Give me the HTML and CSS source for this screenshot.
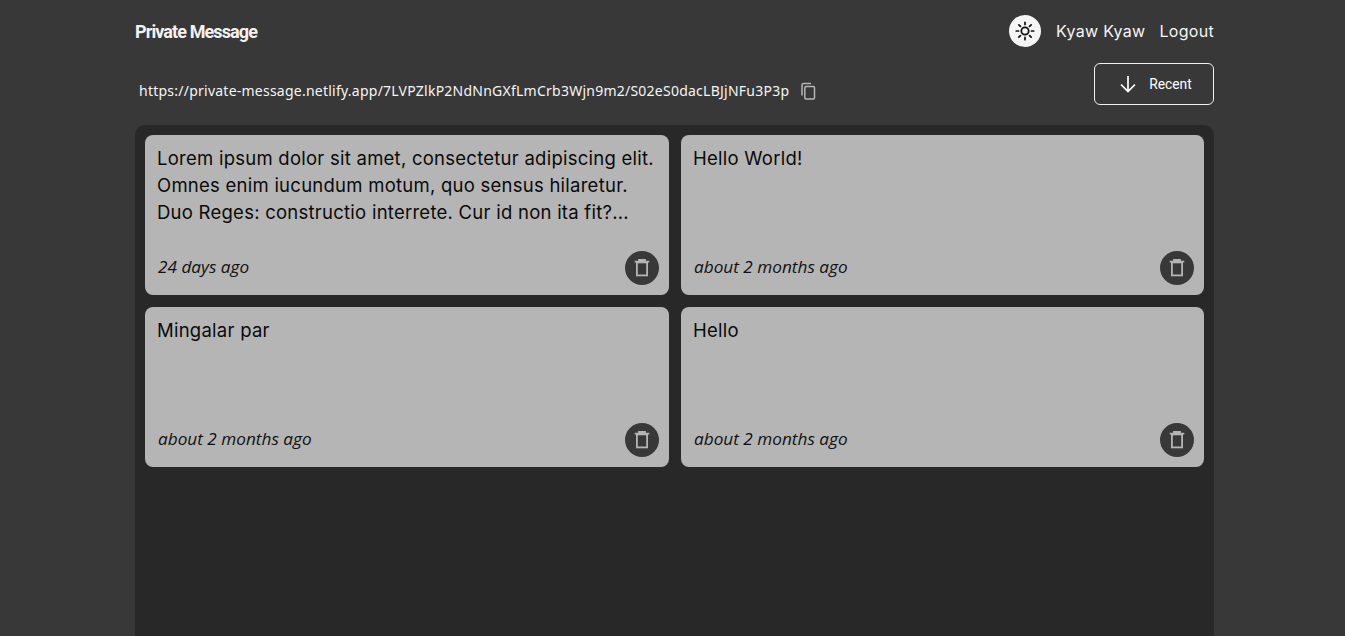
FILE: index.html
```html
<!DOCTYPE html>
<html lang="en">
<head>
<meta charset="utf-8">
<title>Private Message</title>
<link rel="stylesheet" href="styles.css">
</head>
<body>
<div class="page">
  <header class="topbar">
    <div class="brand">Private Message</div>
    <nav class="nav">
      <button class="theme" aria-label="Toggle theme">
        <svg viewBox="0 0 24 24" width="22" height="22" fill="none" stroke="#111" stroke-width="1.900" stroke-linecap="round"><circle cx="12" cy="12" r="4"/><path d="M12 2.500v2.500M12 19v2.500M2.500 12H5M19 12h2.500M5.300 5.300 7 7M17 17l1.700 1.700M5.300 18.700 7 17M17 7l1.700-1.700"/></svg>
      </button>
      <span class="nav-user">Kyaw Kyaw</span>
      <span class="nav-link">Logout</span>
    </nav>
  </header>
  <section class="linkbar">
    <div class="link">
      <span class="url">https://private-message.netlify.app/7LVPZlkP2NdNnGXfLmCrb3Wjn9m2/S02eS0dacLBJjNFu3P3p</span>
      <svg class="copy" viewBox="0 0 18 18" width="18" height="18" fill="none" stroke="#b5b5b5" stroke-width="1.500"><path d="M3 13.500V3.200c0-1 .6-1.700 1.700-1.700H12"/><rect x="5.800" y="4.500" width="9.700" height="12.500" rx="1.200"/></svg>
    </div>
    <button class="sort">
      <svg viewBox="0 0 20 20" width="20" height="20" fill="none" stroke="#fff" stroke-width="1.700"><path d="M10 2v15M3 10.500l7 7 7-7"/></svg>
      <span>Recent</span>
    </button>
  </section>
  <main class="panel">
    <article class="card">
      <p class="msg">Lorem ipsum dolor sit amet, consectetur adipiscing elit. Omnes enim iucundum motum, quo sensus hilaretur. Duo Reges: constructio interrete. Cur id non ita fit?...</p>
      <footer class="card-foot">
        <time>24 days ago</time>
        <button class="del" aria-label="Delete"><svg viewBox="0 0 20 20" width="20" height="20" fill="none" stroke="#b5b5b5" stroke-width="1.800"><path d="M2.700 3.600h14.600M7 3.400V1.900h6v1.500"/><rect x="4.900" y="4.400" width="10.200" height="13"/></svg></button>
      </footer>
    </article>
    <article class="card">
      <p class="msg">Hello World!</p>
      <footer class="card-foot">
        <time>about 2 months ago</time>
        <button class="del" aria-label="Delete"><svg viewBox="0 0 20 20" width="20" height="20" fill="none" stroke="#b5b5b5" stroke-width="1.800"><path d="M2.700 3.600h14.600M7 3.400V1.900h6v1.500"/><rect x="4.900" y="4.400" width="10.200" height="13"/></svg></button>
      </footer>
    </article>
    <article class="card">
      <p class="msg">Mingalar par</p>
      <footer class="card-foot">
        <time>about 2 months ago</time>
        <button class="del" aria-label="Delete"><svg viewBox="0 0 20 20" width="20" height="20" fill="none" stroke="#b5b5b5" stroke-width="1.800"><path d="M2.700 3.600h14.600M7 3.400V1.900h6v1.500"/><rect x="4.900" y="4.400" width="10.200" height="13"/></svg></button>
      </footer>
    </article>
    <article class="card">
      <p class="msg">Hello</p>
      <footer class="card-foot">
        <time>about 2 months ago</time>
        <button class="del" aria-label="Delete"><svg viewBox="0 0 20 20" width="20" height="20" fill="none" stroke="#b5b5b5" stroke-width="1.800"><path d="M2.700 3.600h14.600M7 3.400V1.900h6v1.500"/><rect x="4.900" y="4.400" width="10.200" height="13"/></svg></button>
      </footer>
    </article>
  </main>
</div>
</body>
</html>
```
FILE: styles.css
```css
* { box-sizing: border-box; }
html, body { margin: 0; height: 100%; overflow: hidden; }
body { background: #383838; color: #fff; font-family: "Inter", sans-serif; }
.page { width: 1079px; margin-left: 135px; height: 636px; display: flex; flex-direction: column; }
.topbar { display: flex; justify-content: space-between; align-items: center; height: 63px; padding-bottom: 1px; }
.brand { font-family: "Roboto", sans-serif; font-weight: 700; font-size: 18px; letter-spacing: -0.9px; color: #f2f2f2; }
.nav { display: flex; align-items: center; }
.theme { width: 32px; height: 32px; border-radius: 50%; border: 0; padding: 0; background: #f5f5f5; display: flex; align-items: center; justify-content: center; margin-right: 15px; }
.nav-user, .nav-link { font-size: 16px; letter-spacing: 0.3px; color: #f5f5f5; white-space: nowrap; }
.nav-user { margin-right: 14px; }
.linkbar { display: flex; justify-content: space-between; height: 42px; margin-bottom: 20px; }
.link { display: flex; align-items: center; padding-left: 4px; padding-top: 12px; gap: 10px; }
.url { font-family: "Noto Sans", sans-serif; font-size: 14px; letter-spacing: 0.24px; color: #f5f5f5; white-space: nowrap; }
.copy { margin-top: 2px; }
.sort { width: 120px; height: 42px; border: 1px solid #f0f0f0; border-radius: 6px; background: transparent; color: #fff; display: flex; align-items: center; justify-content: center; gap: 11px; font-family: "Roboto", sans-serif; font-size: 13.800px; padding: 0 0 0 2px; }
.panel { flex: 1; background: #282828; border-radius: 10px 10px 0 0; padding: 10px; display: grid; grid-template-columns: 524px 523px; grid-auto-rows: 160px; gap: 12px; align-content: start; }
.card { background: #b5b5b5; border-radius: 8px; color: #0a0a0a; padding: 10px 10px 10px 12px; display: flex; flex-direction: column; justify-content: space-between; }
.msg { margin: 0; font-size: 18.500px; letter-spacing: 0.25px; line-height: 27px; }
.card-foot { display: flex; justify-content: space-between; align-items: center; }
.card-foot time { font-family: "Open Sans", sans-serif; font-style: italic; font-size: 17.200px; line-height: 20px; margin-left: 1px; margin-bottom: 2px; color: #111; }
.del { width: 34px; height: 34px; border-radius: 50%; border: 0; padding: 0; background: #383838; display: flex; align-items: center; justify-content: center; }
```
